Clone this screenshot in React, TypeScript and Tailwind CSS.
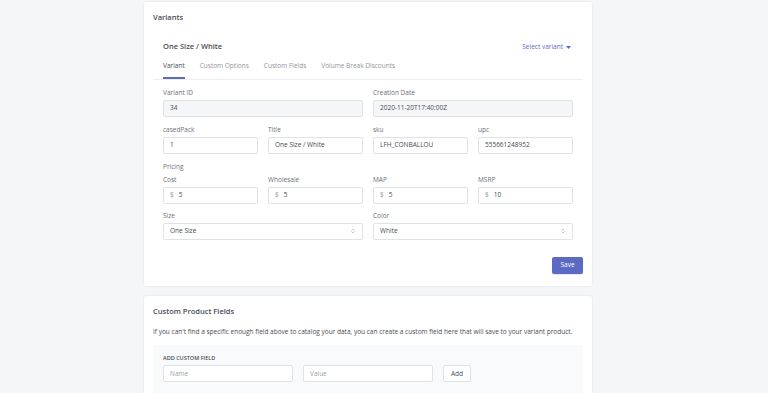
import { ChevronsUpDown } from 'lucide-react';

const font = { fontFamily: '"Open Sans", "Liberation Sans", sans-serif' };

function Field({ label, value, disabled, prefix }: { label: string; value: string; disabled?: boolean; prefix?: boolean }) {
  return (
    <div className="flex flex-col">
      <span className="h-[10px] text-[6.5px] leading-[10px] text-[#6b7079]">{label}</span>
      <div
        className={
          'mt-[2px] flex h-[17px] items-center rounded-[2px] border border-[#dfe3e8] px-[6px] text-[6.5px] text-[#474c55] ' +
          (disabled ? 'bg-[#f4f6f8]' : 'bg-white')
        }
      >
        {prefix && <span className="mr-[5px] text-[#8f959e]">$</span>}
        {value}
      </div>
    </div>
  );
}

function SelectField({ label, value }: { label: string; value: string }) {
  return (
    <div className="flex flex-col">
      <span className="h-[10px] text-[6.5px] leading-[10px] text-[#6b7079]">{label}</span>
      <div className="mt-[2px] flex h-[17px] items-center justify-between rounded-[2px] border border-[#dfe3e8] bg-white px-[6px] text-[6.5px] text-[#474c55]">
        {value}
        <ChevronsUpDown size={6} strokeWidth={2} className="text-[#8f959e]" />
      </div>
    </div>
  );
}

export default function App() {
  return (
    <div className="h-[393px] w-[768px] overflow-hidden bg-[#f4f6f8] pl-[144px] pt-[2px]" style={font}>
      {/* Variants card */}
      <div className="h-[284px] w-[448px] rounded-[2px] bg-white px-[9px] pt-[9px] shadow-[0_0_2px_rgba(63,63,68,0.15)]">
        <h2 className="h-[12px] text-[7.5px] font-semibold leading-[12px] text-[#474c55]">Variants</h2>

        <div className="mt-[18px]">
          <div className="flex h-[12px] items-center justify-between pl-[10px] pr-[12px]">
            <span className="text-[7.5px] font-semibold text-[#474c55]">One Size / White</span>
            <span className="flex items-center gap-[3px] text-[6.5px] text-[#5c6ac4]">
              Select variant
              <svg width="5" height="3" viewBox="0 0 5 3">
                <path d="M0 0 L5 0 L2.5 3 Z" fill="#5c6ac4" />
              </svg>
            </span>
          </div>

          <div className="mt-[6px] flex gap-[15px] border-b border-[#eceef1] px-[10px] text-[6.5px] text-[#8f959e]">
            <span className="border-b-2 border-[#5c6ac4] pb-[6px] pt-[2px] text-[#474c55]">Variant</span>
            <span className="pb-[6px] pt-[2px]">Custom Options</span>
            <span className="pb-[6px] pt-[2px]">Custom Fields</span>
            <span className="pb-[6px] pt-[2px]">Volume Break Discounts</span>
          </div>

          <div className="px-[10px] pt-[8px]">
            <div className="grid grid-cols-2 gap-x-[10px]">
              <Field label="Variant ID" value="34" disabled />
              <Field label="Creation Date" value="2020-11-20T17:40:00Z" disabled />
            </div>
            <div className="mt-[8px] grid grid-cols-4 gap-x-[10px]">
              <Field label="casedPack" value="1" />
              <Field label="Title" value="One Size / White" />
              <Field label="sku" value="LFH_CONBALLOU" />
              <Field label="upc" value="555661248952" />
            </div>
            <div className="mt-[8px] h-[10px] text-[6.5px] leading-[10px] text-[#6b7079]">Pricing</div>
            <div className="mt-[3px] grid grid-cols-4 gap-x-[10px]">
              <Field label="Cost" value="5" prefix />
              <Field label="Wholesale" value="5" prefix />
              <Field label="MAP" value="5" prefix />
              <Field label="MSRP" value="10" prefix />
            </div>
            <div className="mt-[7px] grid grid-cols-2 gap-x-[10px]">
              <SelectField label="Size" value="One Size" />
              <SelectField label="Color" value="White" />
            </div>
          </div>

          <div className="mt-[17px] flex justify-end">
            <button className="h-[17px] w-[31px] rounded-[2px] bg-[#5c6ac4] text-[6.5px] text-white shadow-[0_1px_1px_rgba(0,0,0,0.1)]">
              Save
            </button>
          </div>
        </div>
      </div>

      {/* Custom Product Fields card */}
      <div className="mt-[10px] h-[120px] w-[448px] rounded-[2px] bg-white px-[9px] pt-[9px] shadow-[0_0_2px_rgba(63,63,68,0.15)]">
        <h2 className="h-[12px] text-[7.5px] font-semibold leading-[12px] text-[#474c55]">Custom Product Fields</h2>
        <p className="mt-[10px] h-[10px] text-[6.5px] leading-[10px] text-[#474c55]">
          If you can't find a specific enough field above to catalog your data, you can create a custom field here that will save to your variant product.
        </p>
        <div className="mt-[8px] h-[60px] bg-[#f9fafb] px-[10px] pt-[8px]">
          <div className="h-[10px] text-[5.5px] font-semibold uppercase leading-[10px] text-[#474c55]">Add custom field</div>
          <div className="mt-[2px] flex gap-[10px]">
            <div className="flex h-[17px] w-[130px] items-center rounded-[2px] border border-[#dfe3e8] bg-white px-[6px] text-[6.5px] text-[#9ba0a8]">
              Name
            </div>
            <div className="flex h-[17px] w-[130px] items-center rounded-[2px] border border-[#dfe3e8] bg-white px-[6px] text-[6.5px] text-[#9ba0a8]">
              Value
            </div>
            <button className="h-[17px] w-[28px] rounded-[2px] border border-[#dfe3e8] bg-white text-[6.5px] text-[#474c55]">
              Add
            </button>
          </div>
        </div>
      </div>
    </div>
  );
}
